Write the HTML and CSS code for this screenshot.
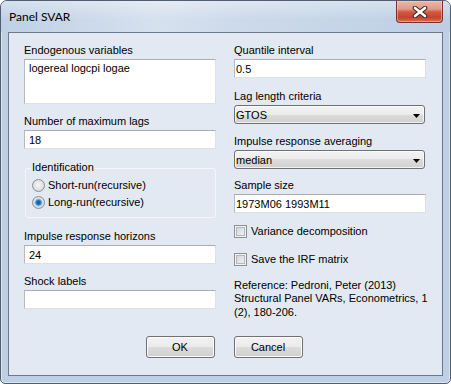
FILE: index.html
```html
<!DOCTYPE html>
<html>
<head>
<meta charset="utf-8">
<title>Panel SVAR</title>
<link rel="stylesheet" href="styles.css">
</head>
<body>
<div class="window">
  <div class="titlebar">
    <span class="title">Panel SVAR</span>
    <span class="close">
      <svg width="16" height="12" viewBox="0 0 16 12">
        <path d="M3 2 L13 10 M13 2 L3 10" stroke="#3b2622" stroke-width="4.6" stroke-linecap="round" fill="none"/>
        <path d="M3 2 L13 10 M13 2 L3 10" stroke="#ffffff" stroke-width="2.6" stroke-linecap="round" fill="none"/>
      </svg>
    </span>
  </div>
  <div class="client">
    <div class="columns">
      <div class="col">
        <div class="lbl">Endogenous variables</div>
        <div class="field textarea pad-l">logereal logcpi logae</div>

        <div class="lbl gap11">Number of maximum lags</div>
        <div class="field pad-l">18</div>

        <fieldset class="group">
          <legend class="legend">Identification</legend>
          <div class="opt"><span class="radio"></span><span class="opt-text">Short-run(recursive)</span></div>
          <div class="opt"><span class="radio checked"></span><span class="opt-text">Long-run(recursive)</span></div>
        </fieldset>

        <div class="lbl gap12">Impulse response horizons</div>
        <div class="field pad-l">24</div>

        <div class="lbl gap11">Shock labels</div>
        <div class="field pad-l"></div>
      </div>

      <div class="col">
        <div class="lbl">Quantile interval</div>
        <div class="field pad-r">0.5</div>

        <div class="lbl gap12">Lag length criteria</div>
        <div class="combo"><span>GTOS</span><svg class="arrow" width="7" height="4" viewBox="0 0 7 4"><path d="M0 0 H7 L3.5 4 Z" fill="#000"/></svg></div>

        <div class="lbl gap11">Impulse response averaging</div>
        <div class="combo"><span>median</span><svg class="arrow" width="7" height="4" viewBox="0 0 7 4"><path d="M0 0 H7 L3.5 4 Z" fill="#000"/></svg></div>

        <div class="lbl gap10">Sample size</div>
        <div class="field pad-r">1973M06 1993M11</div>

        <div class="check first"><span class="box"></span><span class="opt-text">Variance decomposition</span></div>
        <div class="check second"><span class="box"></span><span class="opt-text">Save the IRF matrix</span></div>

        <div class="reference">Reference: Pedroni, Peter (2013)<br>Structural Panel VARs, Econometrics, 1<br>(2), 180-206.</div>
      </div>
    </div>

    <div class="buttons">
      <div class="btn">OK</div>
      <div class="btn">Cancel</div>
    </div>
  </div>
</div>
</body>
</html>
```
FILE: styles.css
```css
* { box-sizing: border-box; }
html, body { margin: 0; padding: 0; }
body {
  width: 451px;
  height: 384px;
  overflow: hidden;
  background: #ffffff;
  font-family: "Liberation Sans", Arial, sans-serif;
  font-size: 11px;
  color: #000;
}
.window {
  width: 451px;
  height: 384px;
  border: 1px solid #4f5e73;
  border-radius: 7px 7px 5px 5px;
  padding: 0 7px 7px;
  display: flex;
  flex-direction: column;
  overflow: hidden;
  background: #bfd0e5;
  box-shadow: inset 0 0 0 1px rgba(255,255,255,0.45);
}
.titlebar {
  height: 31px;
  margin: 0 -7px;
  padding: 0 7px;
  flex: none;
  display: flex;
  justify-content: space-between;
  align-items: flex-start;
  background:
    linear-gradient(to bottom, rgba(255,255,255,0.35), rgba(255,255,255,0) 60%),
    linear-gradient(to right, #bfd0e5 0%, #c9d7e9 15%, #d6e1ee 35%, #ccd9ea 55%, #c4d4e7 80%, #bccee4 100%);
}
.title {
  font-family: Lato, "Liberation Sans", sans-serif;
  font-size: 12px;
  line-height: 16px;
  margin: 8px 0 0 1px;
  color: #000;
}
.close {
  width: 47px;
  height: 22px;
  border: 1px solid #7a3127;
  border-top: none;
  border-radius: 0 0 4px 4px;
  background: linear-gradient(to bottom, #ebb7aa 0%, #e29a87 38%, #d05a42 52%, #c5432c 78%, #dc7054 100%);
  box-shadow: inset 0 0 0 1px rgba(255,215,200,0.45);
  display: flex;
  align-items: center;
  justify-content: center;
}
.client {
  flex: 1;
  border: 1px solid #6a798d;
  background: #e2e9f2;
  padding: 11px 16px 17px 15px;
  display: flex;
  flex-direction: column;
}
.columns {
  display: grid;
  grid-template-columns: 192px 192px;
  column-gap: 18px;
}
.col {
  display: flex;
  flex-direction: column;
}
.lbl {
  line-height: 12px;
  margin-bottom: 3px;
  white-space: nowrap;
}
.gap10 { margin-top: 10px; }
.gap11 { margin-top: 11px; }
.gap12 { margin-top: 12px; }

.field {
  height: 19px;
  background: #fff;
  border: 1px solid #dbe0e8;
  border-top-color: #abadb3;
  border-left-color: #b6b9c0;
  padding-top: 3px;
  line-height: 13px;
  white-space: nowrap;
  overflow: hidden;
}
.pad-l { padding-left: 4px; }
.pad-r { padding-left: 1px; }
.textarea {
  height: 45px;
  padding-top: 2px;
}

.group {
  margin: 12px 0 0 1px;
  padding: 2px 0 6px 6px;
  border: 1px solid #f3f6f9;
  border-radius: 3px;
  min-width: 0;
}
.legend {
  margin-left: -1px;
  padding: 0 1px 2px;
  line-height: 12px;
}
.opt {
  height: 17px;
  display: flex;
  align-items: center;
  line-height: 13px;
}
.radio {
  width: 13px;
  height: 13px;
  border-radius: 50%;
  border: 1px solid #8d8f91;
  background: radial-gradient(circle at 50% 45%, #f7f7f7 0%, #e6e6e6 45%, #c9cbcd 100%);
  flex: none;
}
.radio.checked {
  background:
    radial-gradient(circle at 50% 50%, #1b4f8e 0px, #2a6fbd 2px, #6fb5ea 3.2px, rgba(160,205,240,0.9) 3.8px, rgba(0,0,0,0) 4.3px),
    radial-gradient(circle at 50% 45%, #f7f7f7 0%, #e6e6e6 45%, #c9cbcd 100%);
}
.opt-text {
  margin-left: 3px;
  white-space: nowrap;
}

.combo {
  height: 19px;
  margin-right: 1px;
  border: 1px solid #707070;
  border-radius: 3px;
  background: linear-gradient(to bottom, #f3f3f3 0%, #ebebeb 50%, #dddddd 50%, #d0d0d0 100%);
  box-shadow: inset 0 0 0 1px rgba(255,255,255,0.7);
  padding: 3px 4px 0 1px;
  line-height: 13px;
  display: flex;
  justify-content: space-between;
}
.arrow {
  margin-top: 5px;
  flex: none;
}

.check {
  height: 13px;
  display: flex;
  align-items: center;
  line-height: 13px;
}
.check.first { margin-top: 12px; }
.check.second { margin-top: 15px; }
.box {
  width: 13px;
  height: 13px;
  border: 1px solid #8e8f8f;
  flex: none;
  background: linear-gradient(135deg, #c8cdd4 0%, #e4e6e9 55%, #f6f6f6 100%);
  box-shadow: inset 0 0 0 1px #f2f2f2, inset 0 0 0 2px #b3b8be;
}
.check .opt-text { margin-left: 4px; }

.reference {
  margin-top: 13px;
  line-height: 13.4px;
  white-space: nowrap;
}

.buttons {
  margin-top: auto;
  display: flex;
  justify-content: center;
  gap: 19px;
  padding-right: 2px;
}
.btn {
  width: 69px;
  height: 22px;
  border: 1px solid #707070;
  border-radius: 3px;
  background: linear-gradient(to bottom, #f2f2f2 0%, #ebebeb 50%, #dddddd 50%, #cfcfcf 100%);
  box-shadow: inset 0 0 0 1px #fbfbfb;
  text-align: center;
  line-height: 20px;
}
```
